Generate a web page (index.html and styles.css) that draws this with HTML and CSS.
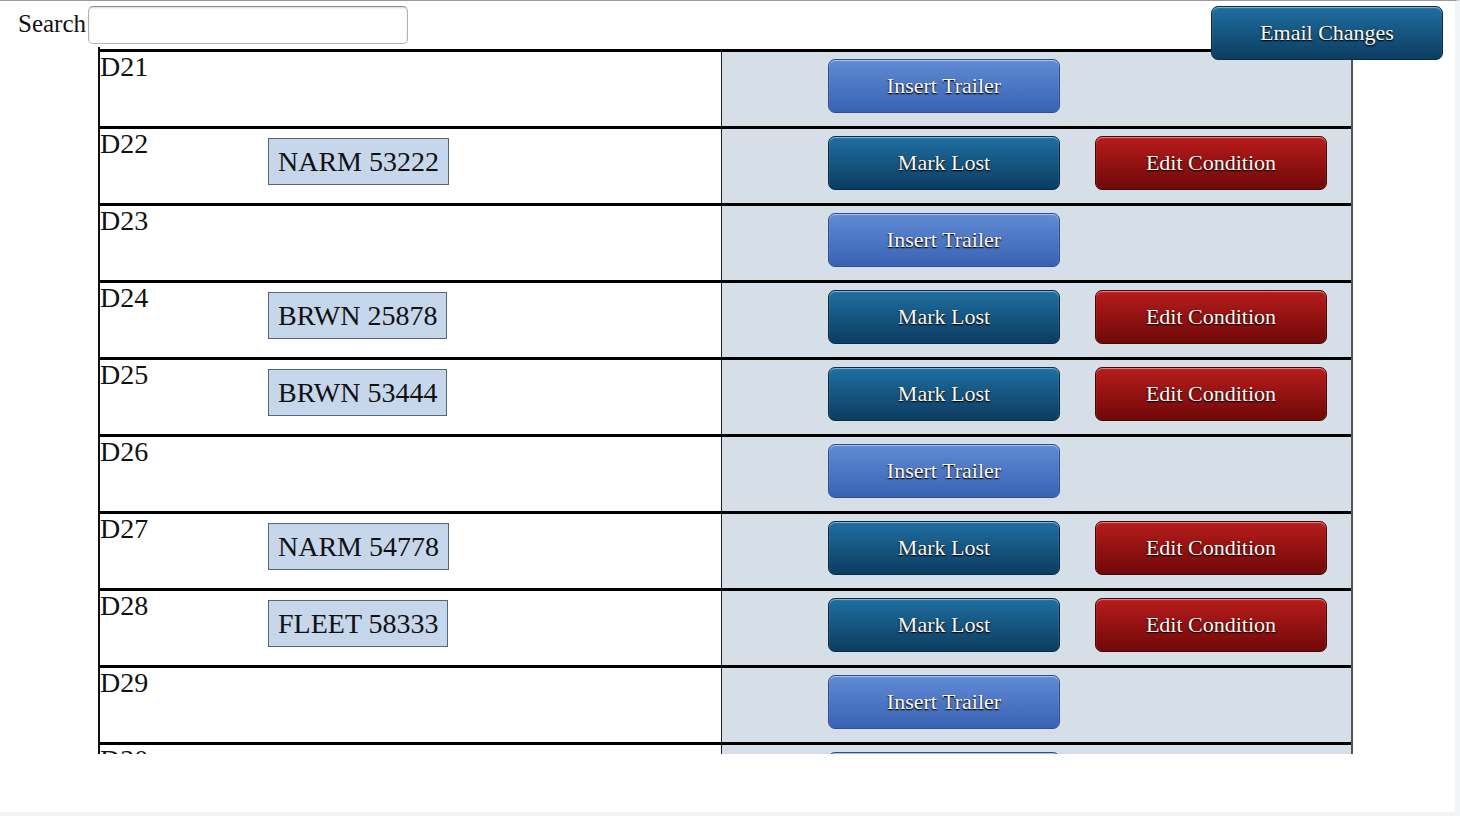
FILE: index.html
```html
<!DOCTYPE html>
<html>
<head>
<meta charset="utf-8">
<link rel="stylesheet" href="styles.css">
</head>
<body>
<div class="page">
  <div class="search-bar">
    <label class="search-label" for="q">Search</label>
    <input id="q" class="search-input" type="text">
  </div>
  <button class="btn btn-dark email-btn">Email Changes</button>
  <div class="scroll">
    <div class="row">
      <div class="left"><span class="door">D21</span></div>
      <div class="right"><button class="btn btn-insert">Insert Trailer</button></div>
    </div>
    <div class="row">
      <div class="left"><span class="door">D22</span><span class="trailer">NARM 53222</span></div>
      <div class="right"><button class="btn btn-dark">Mark Lost</button><button class="btn btn-red">Edit Condition</button></div>
    </div>
    <div class="row">
      <div class="left"><span class="door">D23</span></div>
      <div class="right"><button class="btn btn-insert">Insert Trailer</button></div>
    </div>
    <div class="row">
      <div class="left"><span class="door">D24</span><span class="trailer">BRWN 25878</span></div>
      <div class="right"><button class="btn btn-dark">Mark Lost</button><button class="btn btn-red">Edit Condition</button></div>
    </div>
    <div class="row">
      <div class="left"><span class="door">D25</span><span class="trailer">BRWN 53444</span></div>
      <div class="right"><button class="btn btn-dark">Mark Lost</button><button class="btn btn-red">Edit Condition</button></div>
    </div>
    <div class="row">
      <div class="left"><span class="door">D26</span></div>
      <div class="right"><button class="btn btn-insert">Insert Trailer</button></div>
    </div>
    <div class="row">
      <div class="left"><span class="door">D27</span><span class="trailer">NARM 54778</span></div>
      <div class="right"><button class="btn btn-dark">Mark Lost</button><button class="btn btn-red">Edit Condition</button></div>
    </div>
    <div class="row">
      <div class="left"><span class="door">D28</span><span class="trailer">FLEET 58333</span></div>
      <div class="right"><button class="btn btn-dark">Mark Lost</button><button class="btn btn-red">Edit Condition</button></div>
    </div>
    <div class="row">
      <div class="left"><span class="door">D29</span></div>
      <div class="right"><button class="btn btn-insert">Insert Trailer</button></div>
    </div>
    <div class="row">
      <div class="left"><span class="door">D30</span></div>
      <div class="right"><button class="btn btn-insert">Insert Trailer</button></div>
    </div>
  </div>
</div>
</body>
</html>
```

FILE: styles.css
```css
* { box-sizing: border-box; }
html, body { margin: 0; padding: 0; background: #fff; }
body {
  font-family: "Liberation Serif", "Times New Roman", serif;
  color: #111;
}
.page {
  position: relative;
  width: 1460px;
  height: 816px;
  border-top: 1px solid #9a9a9a;
  border-right: 5px solid #f1f4f6;
  border-bottom: 4px solid #f1f4f6;
  overflow: hidden;
}
.search-bar {
  display: flex;
  align-items: flex-start;
  height: 46px;
  padding-left: 18px;
  padding-top: 5px;
}
.search-label {
  font-size: 25px;
  line-height: 30px;
  padding-top: 3px;
}
.search-input {
  width: 320px;
  height: 38px;
  margin: 0 0 0 2px;
  border: 1px solid #b4b4b4;
  border-top-color: #8e8e8e;
  border-radius: 5px;
  box-shadow: inset 0 1px 2px rgba(0,0,0,0.15);
  background: #fff;
}
.email-btn {
  position: absolute;
  top: 5px;
  right: 12px;
  width: 231px;
  z-index: 2;
}
.scroll {
  margin-left: 98px;
  width: 1255px;
  height: 707px;
  overflow: hidden;
  border-left: 2px solid #111;
  border-right: 2px solid #555;
  padding-top: 2px;
}
.row {
  display: flex;
  height: 77px;
  border-top: 3px solid #000;
}
.left {
  width: 621px;
  display: flex;
  align-items: flex-start;
  background: #fff;
}
.door {
  width: 168px;
  font-size: 28px;
  line-height: 29px;
}
.trailer {
  margin-top: 9px;
  height: 47px;
  line-height: 45px;
  padding: 0 9px;
  font-size: 28px;
  background: #c6d6eb;
  border: 1px solid #56667a;
  color: #111;
}
.right {
  flex: 1;
  display: flex;
  align-items: flex-start;
  gap: 35px;
  padding-left: 106px;
  padding-top: 7px;
  background: #d6dee7;
  border-left: 1px solid #222;
}
.btn {
  width: 232px;
  height: 54px;
  border-radius: 7px;
  font-family: "Liberation Serif", "Times New Roman", serif;
  font-size: 22px;
  color: #fbf8f2;
  text-shadow: 0 1px 1px rgba(0,0,0,0.9), 0 1px 2px rgba(0,0,0,0.6);
  border: 1px solid #0a2f4c;
  box-shadow: 0 1px 1px rgba(255,255,255,0.5) inset;
  padding: 0;
  cursor: pointer;
}
.btn-insert {
  background: linear-gradient(#608bd4, #3a62b3);
  border-color: #2c4f94;
}
.btn-dark {
  background: linear-gradient(#1f6fa1, #0c3c61);
  border-color: #0a2c46;
}
.btn-red {
  background: linear-gradient(#b81c1c, #700808);
  border-color: #4a0505;
}
```
